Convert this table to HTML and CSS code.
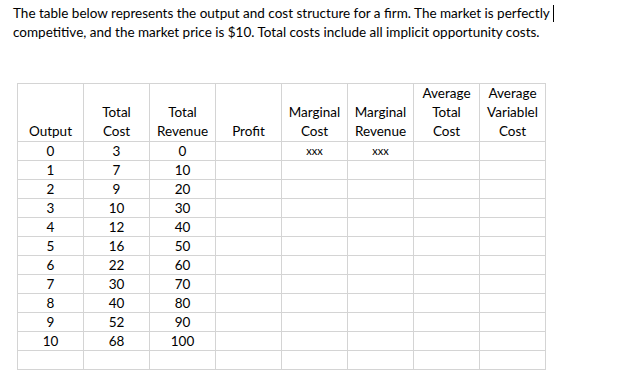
FILE: index.html
```html
<!DOCTYPE html>
<html lang="en">
<head>
    <meta charset="UTF-8">
    <title>Output and cost structure</title>
    <link rel="stylesheet" href="styles.css">
</head>
<body>
    <p class="question">
        The table below represents the output and cost structure for a firm. The market is perfectly<span class="caret"></span><br>
        competitive, and the market price is $10. Total costs include all implicit opportunity costs.
    </p>

    <table class="sheet">
        <thead>
            <tr>
                <th><br><br>Output</th>
                <th><br>Total<br>Cost</th>
                <th><br>Total<br>Revenue</th>
                <th><br><br>Profit</th>
                <th><br>Marginal<br>Cost</th>
                <th><br>Marginal<br>Revenue</th>
                <th>Average<br>Total<br>Cost</th>
                <th>Average<br>Variablel<br>Cost</th>
            </tr>
        </thead>
        <tbody>
            <tr><td>0</td><td>3</td><td>0</td><td></td><td class="na">xxx</td><td class="na">xxx</td><td></td><td></td></tr>
            <tr><td>1</td><td>7</td><td>10</td><td></td><td></td><td></td><td></td><td></td></tr>
            <tr><td>2</td><td>9</td><td>20</td><td></td><td></td><td></td><td></td><td></td></tr>
            <tr><td>3</td><td>10</td><td>30</td><td></td><td></td><td></td><td></td><td></td></tr>
            <tr><td>4</td><td>12</td><td>40</td><td></td><td></td><td></td><td></td><td></td></tr>
            <tr><td>5</td><td>16</td><td>50</td><td></td><td></td><td></td><td></td><td></td></tr>
            <tr><td>6</td><td>22</td><td>60</td><td></td><td></td><td></td><td></td><td></td></tr>
            <tr><td>7</td><td>30</td><td>70</td><td></td><td></td><td></td><td></td><td></td></tr>
            <tr><td>8</td><td>40</td><td>80</td><td></td><td></td><td></td><td></td><td></td></tr>
            <tr><td>9</td><td>52</td><td>90</td><td></td><td></td><td></td><td></td><td></td></tr>
            <tr><td>10</td><td>68</td><td>100</td><td></td><td></td><td></td><td></td><td></td></tr>
            <tr><td></td><td></td><td></td><td></td><td></td><td></td><td></td><td></td></tr>
        </tbody>
    </table>
</body>
</html>
```

FILE: styles.css
```css
body {
    margin: 0;
    background: #fff;
    color: #000;
    font-family: Lato, "Open Sans", sans-serif;
}
.question {
    margin: 0;
    padding: 4px 0 0 13px;
    font-size: 13.5px;
    line-height: 19px;
}
.caret {
    display: inline-block;
    width: 1px;
    height: 17px;
    margin-left: 3px;
    background: #000;
    vertical-align: -4px;
}
.sheet {
    margin: 41px 0 0 17px;
    border-collapse: collapse;
    table-layout: fixed;
    font-size: 13.5px;
}
.sheet th,
.sheet td {
    width: 65px;
    padding: 0;
    border: 1px solid #d4d4d4;
    text-align: center;
    font-weight: normal;
}
.sheet th {
    height: 55px;
    line-height: 19px;
    vertical-align: bottom;
}
.sheet td {
    height: 18px;
    line-height: 18px;
    vertical-align: bottom;
}
.sheet td.na {
    font-size: 11px;
}
```
